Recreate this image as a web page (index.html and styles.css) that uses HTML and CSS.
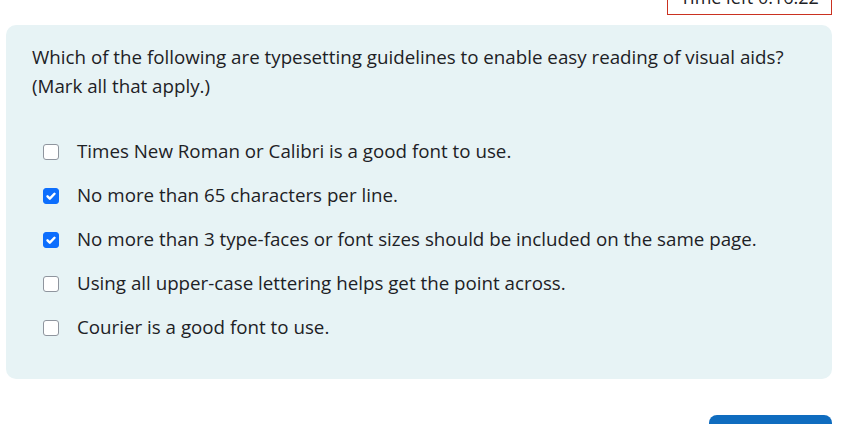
FILE: index.html
```html
<!DOCTYPE html>
<html>
<head>
  <link rel="stylesheet" href="styles.css">
</head>
<body>
  <div class="quiz-top">
    <div class="quiz-timer">Time left 0:16:22</div>
  </div>

  <div class="question-box">
    <p class="question-text">Which of the following are typesetting guidelines to enable easy reading of visual aids? (Mark all that apply.)</p>

    <div class="answers">
      <label class="answer">
        <input type="checkbox" class="answer-check">
        <span>Times New Roman or Calibri is a good font to use.</span>
      </label>
      <label class="answer">
        <input type="checkbox" class="answer-check" checked>
        <span>No more than 65 characters per line.</span>
      </label>
      <label class="answer">
        <input type="checkbox" class="answer-check" checked>
        <span>No more than 3 type-faces or font sizes should be included on the same page.</span>
      </label>
      <label class="answer">
        <input type="checkbox" class="answer-check">
        <span>Using all upper-case lettering helps get the point across.</span>
      </label>
      <label class="answer">
        <input type="checkbox" class="answer-check">
        <span>Courier is a good font to use.</span>
      </label>
    </div>
  </div>

  <div class="quiz-nav">
    <button class="btn-next">Next page</button>
  </div>
</body>
</html>
```

FILE: styles.css
```css
body {
  margin: 0;
  padding: 0 26px 0 6px;
  background: #fff;
  color: #1d2125;
  font-family: "Segoe UI", "Open Sans", "Noto Sans", sans-serif;
  font-size: 18.75px;
  line-height: 1.5;
  overflow: hidden;
  height: 424px;
}

.quiz-top {
  display: flex;
  justify-content: flex-end;
  height: 25px;
}

.quiz-timer {
  margin-top: -15px;
  width: 165px;
  height: 30px;
  border: 1px solid #ca3120;
  font-size: 18px;
  line-height: 22px;
  text-align: center;
  color: #1d2125;
  box-sizing: border-box;
}

.question-box {
  background: #e7f3f5;
  border-radius: 10px;
  padding: 17px 26px 37px 26px;
}

.question-text {
  margin: 0 0 37px;
  line-height: 29px;
  max-width: 770px;
}

.answers {
  display: flex;
  flex-direction: column;
  gap: 15px;
}

.answer {
  display: flex;
  align-items: center;
  gap: 18px;
  padding-left: 11px;
  min-height: 29px;
}

.answer-check {
  appearance: none;
  margin: 0;
  width: 16px;
  height: 16px;
  border: 1px solid #8f959e;
  border-radius: 3px;
  background: #fff;
  flex-shrink: 0;
}

/* white tick on blue for selected answers */
.answer-check:checked {
  border-color: #0d6efd;
  background: #0d6efd url("data:image/svg+xml,%3csvg xmlns='http://www.w3.org/2000/svg' viewBox='0 0 20 20'%3e%3cpath fill='none' stroke='%23fff' stroke-linecap='round' stroke-linejoin='round' stroke-width='3.5' d='M5 10.5l3.3 3.3l6.7-7'/%3e%3c/svg%3e") center / 100% no-repeat;
}

.quiz-nav {
  display: flex;
  justify-content: flex-end;
  margin-top: 36px;
}

.btn-next {
  width: 123px;
  height: 40px;
  border: none;
  border-radius: 8px;
  background: #0f6cbf;
  color: #fff;
  font: inherit;
}
```
